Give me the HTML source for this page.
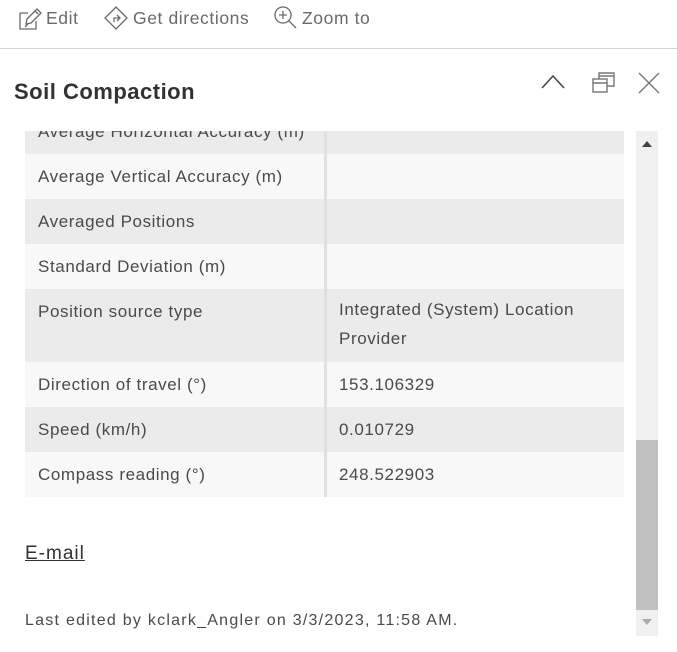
<!DOCTYPE html>
<html><head><style>
body{margin:0;width:677px;height:652px;background:#fff;font-family:"Liberation Sans",sans-serif;color:#4a4a4a;position:relative;overflow:hidden}
.top{position:absolute;top:0;left:0;width:677px;height:48px;border-bottom:1px solid #d4d4d4}
.act{position:absolute;top:8px;font-size:17.5px;color:#6a6a6a;letter-spacing:0.6px}
h1{position:absolute;left:14px;top:79px;margin:0;font-size:22px;font-weight:bold;color:#323232;letter-spacing:0.5px}
.tbl{position:absolute;left:25px;top:131px;width:599px;height:366px;overflow:hidden}
.r{position:absolute;left:0;width:599px;font-size:17px;color:#4a4a4a;letter-spacing:0.6px}
.r .a{position:absolute;left:13px;top:13px}
.r .b{position:absolute;left:314px;top:13px}
.r .c{position:absolute;left:314px;top:6px;line-height:29px}
.g{background:#ebebeb}.w{background:#f8f8f8}
.div{position:absolute;left:299px;top:0;width:3px;height:366px;background:#e0e0e0}
.sb{position:absolute;left:636px;top:131px;width:22px;height:505px;background:#f0f0f0}
.th{position:absolute;left:636px;top:440px;width:22px;height:170px;background:#c1c1c1}
</style></head><body>
<div class="top">
<svg style="position:absolute;left:18px;top:7px" width="24" height="24" viewBox="0 0 24 24" fill="none" stroke="#6a6a6a" stroke-width="1.3"><path d="M2 6h8M2 6v16h16v-8"/><path d="M8 17l1-5 10-10 4 4-10 10z M17 4l3 3 M7 20l3-3"/></svg>
<span class="act" style="left:46px">Edit</span>
<svg style="position:absolute;left:104px;top:6px" width="24" height="24" viewBox="0 0 24 24" fill="none" stroke="#6a6a6a" stroke-width="1.3"><path d="M12 1l11 11-11 11L1 12z"/><path d="M10 16v-4h5M13 9l3 3-3 3"/></svg>
<span class="act" style="left:133px">Get directions</span>
<svg style="position:absolute;left:273px;top:5px" width="24" height="24" viewBox="0 0 24 24" fill="none" stroke="#6a6a6a" stroke-width="1.3"><circle cx="10" cy="10" r="8"/><path d="M16 16l7 7M10 6v8M6 10h8"/></svg>
<span class="act" style="left:302px">Zoom to</span>
</div>
<h1>Soil Compaction</h1>
<svg style="position:absolute;left:540px;top:72px" width="26" height="20" viewBox="0 0 26 20" fill="none" stroke="#444" stroke-width="1.5"><path d="M2 16L13 4l11 12"/></svg>
<svg style="position:absolute;left:591px;top:70px" width="26" height="26" viewBox="0 0 26 26" fill="none" stroke="#777" stroke-width="1.4"><rect x="2" y="9" width="14" height="13"/><path d="M2 13h14M8 9V3h15v13h-7M8 6h15"/></svg>
<svg style="position:absolute;left:637px;top:71px" width="24" height="24" viewBox="0 0 24 24" fill="none" stroke="#777" stroke-width="1.4"><path d="M2 2l20 20M22 2L2 22"/></svg>
<div class="tbl">
<div class="r g" style="top:-22px;height:45px"><span class="a">Average Horizontal Accuracy (m)</span></div>
<div class="r w" style="top:23px;height:45px"><span class="a">Average Vertical Accuracy (m)</span></div>
<div class="r g" style="top:68px;height:45px"><span class="a">Averaged Positions</span></div>
<div class="r w" style="top:113px;height:45px"><span class="a">Standard Deviation (m)</span></div>
<div class="r g" style="top:158px;height:73px"><span class="a">Position source type</span><span class="c">Integrated (System) Location<br>Provider</span></div>
<div class="r w" style="top:231px;height:45px"><span class="a">Direction of travel (°)</span><span class="b">153.106329</span></div>
<div class="r g" style="top:276px;height:45px"><span class="a">Speed (km/h)</span><span class="b">0.010729</span></div>
<div class="r w" style="top:321px;height:45px"><span class="a">Compass reading (°)</span><span class="b">248.522903</span></div>
<div class="div"></div>
</div>
<div class="sb"></div><div class="th"></div>
<svg style="position:absolute;left:641px;top:140px" width="12" height="8"><path d="M1 7L6 1l5 6z" fill="#444"/></svg>
<svg style="position:absolute;left:641px;top:618px" width="12" height="8"><path d="M1 1L6 7l5-6z" fill="#aaa"/></svg>
<a style="position:absolute;left:25px;top:543px;font-size:19px;color:#323232;text-decoration:underline;letter-spacing:1px">E-mail</a>
<div style="position:absolute;left:25px;top:612px;font-size:16px;color:#4a4a4a;letter-spacing:1.25px">Last edited by kclark_Angler on 3/3/2023, 11:58 AM.</div>
</body></html>
